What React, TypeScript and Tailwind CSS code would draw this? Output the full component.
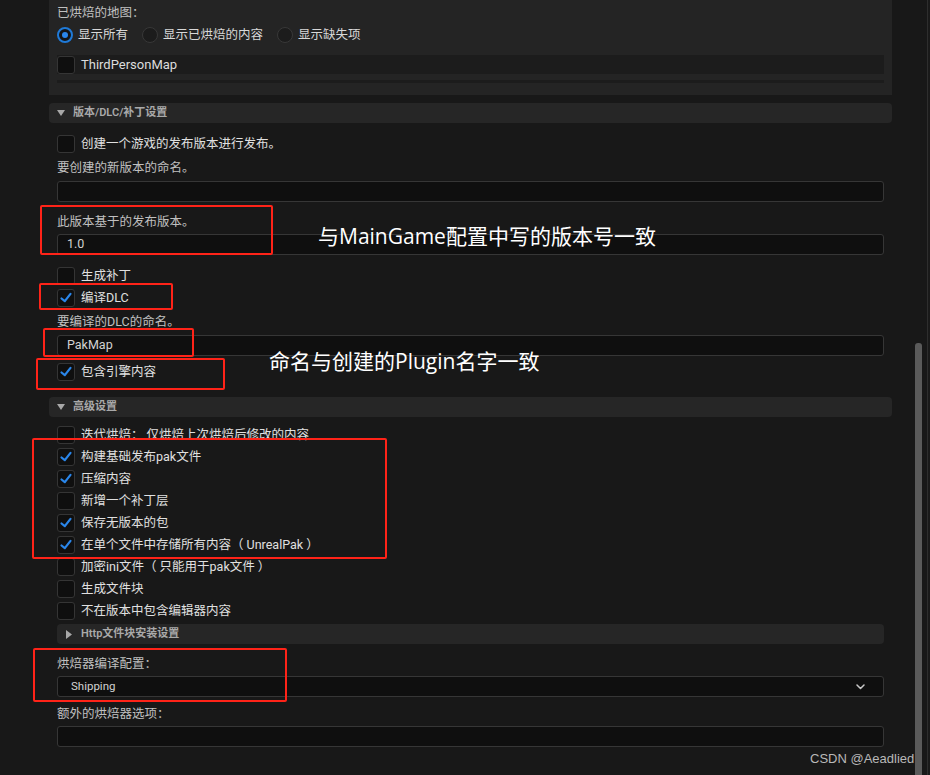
import React from "react";

function Box({ checked }: { checked?: boolean }) {
  return (
    <span className="w-[18px] h-[18px] shrink-0 rounded-[3px] border border-[#353535] bg-[#0f0f0f] flex items-center justify-center">
      {checked && (
        <svg width="16" height="16" viewBox="0 0 16 16">
          <path d="M3.5 8.5 L6.8 11.2 L12.5 3.8" stroke="#2a86ea" strokeWidth="2.2" fill="none" strokeLinecap="round" strokeLinejoin="round" />
        </svg>
      )}
    </span>
  );
}

function CheckRow({ label, checked }: { label: string; checked?: boolean }) {
  return (
    <div className="h-[22px] flex items-center gap-[6px]">
      <Box checked={checked} />
      <span className="text-[12.5px] leading-[18px] text-[#e0e0e0] whitespace-pre">{label}</span>
    </div>
  );
}

function Label({ text, className = "" }: { text: string; className?: string }) {
  return <div className={`h-[18px] leading-[18px] text-[12.5px] text-[#c0c0c0] whitespace-nowrap ${className}`}>{text}</div>;
}

function Input({ value, className = "" }: { value?: string; className?: string }) {
  return (
    <div className={`h-[21px] rounded-[3px] border border-[#363636] bg-[#0f0f0f] px-[9px] flex items-center text-[12.5px] text-[#d2d2d2] ${className}`}>
      {value}
    </div>
  );
}

function Radio({ selected, label }: { selected?: boolean; label: string }) {
  return (
    <div className="flex items-center gap-[5px] mr-[14px]">
      {selected ? (
        <span className="w-[16px] h-[16px] rounded-full border-2 border-[#1f7ad8] bg-[#141414] flex items-center justify-center">
          <span className="w-[6px] h-[6px] rounded-full bg-[#2a86ea]" />
        </span>
      ) : (
        <span className="w-[16px] h-[16px] rounded-full border border-[#383838] bg-[#1c1c1c]" />
      )}
      <span className="text-[12.5px] text-[#d8d8d8] whitespace-nowrap">{label}</span>
    </div>
  );
}

function SectionHeader({ label, className = "" }: { label: string; className?: string }) {
  return (
    <div className={`h-[20px] rounded-[4px] bg-[#262626] flex items-center pl-[8px] ${className}`}>
      <svg width="8" height="6" viewBox="0 0 8 6" className="mr-[8px]">
        <path d="M0 0 L8 0 L4 6 Z" fill="#a8a8a8" />
      </svg>
      <span className="text-[11px] font-semibold text-[#a9a9a9] whitespace-nowrap">{label}</span>
    </div>
  );
}

function RedBox({ className }: { className: string }) {
  return <div className={`absolute border-2 border-[#ff2318] rounded-[2px] pointer-events-none ${className}`} />;
}

export default function App() {
  return (
    <div className="relative w-[930px] h-[775px] overflow-hidden bg-[#181818] flex font-['Roboto','Noto_Sans_CJK_SC',sans-serif]">
      <div className="w-[49px] shrink-0" />
      <main className="w-[843px] shrink-0 flex flex-col">
        {/* Top panel */}
        <div className="bg-[#242424] px-[8px] pt-[3px] pb-[12px] flex flex-col">
          <Label text="已烘焙的地图：" className="mt-[1px]" />
          <div className="mt-[4px] h-[18px] flex items-center">
            <Radio selected label="显示所有" />
            <Radio label="显示已烘焙的内容" />
            <Radio label="显示缺失项" />
          </div>
          <div className="mt-[11px] h-[19px] bg-[#1c1c1c] flex items-center gap-[6px]">
            <Box />
            <span className="text-[13px] text-[#dcdcdc]">ThirdPersonMap</span>
          </div>
          <div className="mt-[6px] h-[3px] bg-[#1c1c1c]" />
        </div>

        <SectionHeader label="版本/DLC/补丁设置" className="mt-[8px]" />

        <div className="px-[8px] flex flex-col">
          <div className="mt-[10px]">
            <CheckRow label="创建一个游戏的发布版本进行发布。" />
          </div>
          <Label text="要创建的新版本的命名。" className="mt-[4px]" />
          <Input className="mt-[4px]" />
          <Label text="此版本基于的发布版本。" className="mt-[11px]" />
          <Input value="1.0" className="mt-[3px]" />
          <div className="mt-[10px]">
            <CheckRow label="生成补丁" />
            <CheckRow label="编译DLC" checked />
          </div>
          <Label text="要编译的DLC的命名。" className="mt-[4px]" />
          <Input value="PakMap" className="mt-[4px]" />
          <div className="mt-[5px]">
            <CheckRow label="包含引擎内容" checked />
          </div>
        </div>

        <SectionHeader label="高级设置" className="mt-[14px]" />

        <div className="px-[8px] flex flex-col">
          <div className="mt-[7px] flex flex-col">
            <CheckRow label="迭代烘焙： 仅烘焙上次烘焙后修改的内容" />
            <CheckRow label="构建基础发布pak文件" checked />
            <CheckRow label="压缩内容" checked />
            <CheckRow label="新增一个补丁层" />
            <CheckRow label="保存无版本的包" checked />
            <CheckRow label="在单个文件中存储所有内容（ UnrealPak ）" checked />
            <CheckRow label="加密ini文件（ 只能用于pak文件 ）" />
            <CheckRow label="生成文件块" />
            <CheckRow label="不在版本中包含编辑器内容" />
          </div>
          <div className="mt-[2px] h-[20px] rounded-[4px] bg-[#262626] flex items-center pl-[9px]">
            <svg width="6" height="9" viewBox="0 0 6 9" className="mr-[9px]">
              <path d="M0 0 L6 4.5 L0 9 Z" fill="#a8a8a8" />
            </svg>
            <span className="text-[11px] font-semibold text-[#a9a9a9] whitespace-nowrap">Http文件块安装设置</span>
          </div>
          <Label text="烘焙器编译配置：" className="mt-[11px]" />
          <div className="mt-[3px] h-[21px] rounded-[3px] border border-[#363636] bg-[#0f0f0f] pl-[13px] pr-[18px] flex items-center justify-between">
            <span className="text-[11.5px] text-[#d2d2d2]">Shipping</span>
            <svg width="9" height="6" viewBox="0 0 9 6">
              <path d="M1 1 L4.5 4.5 L8 1" stroke="#c8c8c8" strokeWidth="1.5" fill="none" strokeLinecap="round" strokeLinejoin="round" />
            </svg>
          </div>
          <Label text="额外的烘焙器选项：" className="mt-[8px]" />
          <Input className="mt-[3px]" />
        </div>
      </main>
      <div className="w-[23px] shrink-0" />
      <div className="w-[7px] shrink-0 pt-[343px] flex flex-col">
        <div className="flex-1 rounded-t-[3px] bg-[#5a5a5a]" />
      </div>
      <div className="w-[5px] shrink-0" />
      <div className="w-px shrink-0 bg-[#2e2e2e]" />
      <div className="flex-1 bg-[#1a1a1a]" />

      {/* annotations */}
      <RedBox className="left-[40px] top-[205px] w-[233px] h-[50px]" />
      <RedBox className="left-[39px] top-[283px] w-[134px] h-[27px]" />
      <RedBox className="left-[43px] top-[328px] w-[151px] h-[29px]" />
      <RedBox className="left-[36px] top-[358px] w-[189px] h-[32px]" />
      <RedBox className="left-[32px] top-[438px] w-[355px] h-[121px]" />
      <RedBox className="left-[33px] top-[648px] w-[254px] h-[54px]" />

      <div className="absolute left-[318px] top-[226px] text-[21px] leading-[21px] text-white whitespace-nowrap font-['Open_Sans','Noto_Sans_CJK_SC',sans-serif]">
        与MainGame配置中写的版本号一致
      </div>
      <div className="absolute left-[269px] top-[351px] text-[21px] leading-[21px] text-white whitespace-nowrap font-['Open_Sans','Noto_Sans_CJK_SC',sans-serif]">
        命名与创建的Plugin名字一致
      </div>
      <div className="absolute left-[810px] top-[751px] text-[13px] leading-[16px] text-[#b8b8b8] whitespace-nowrap font-['Liberation_Sans',sans-serif]">
        CSDN @Aeadlied
      </div>
    </div>
  );
}
